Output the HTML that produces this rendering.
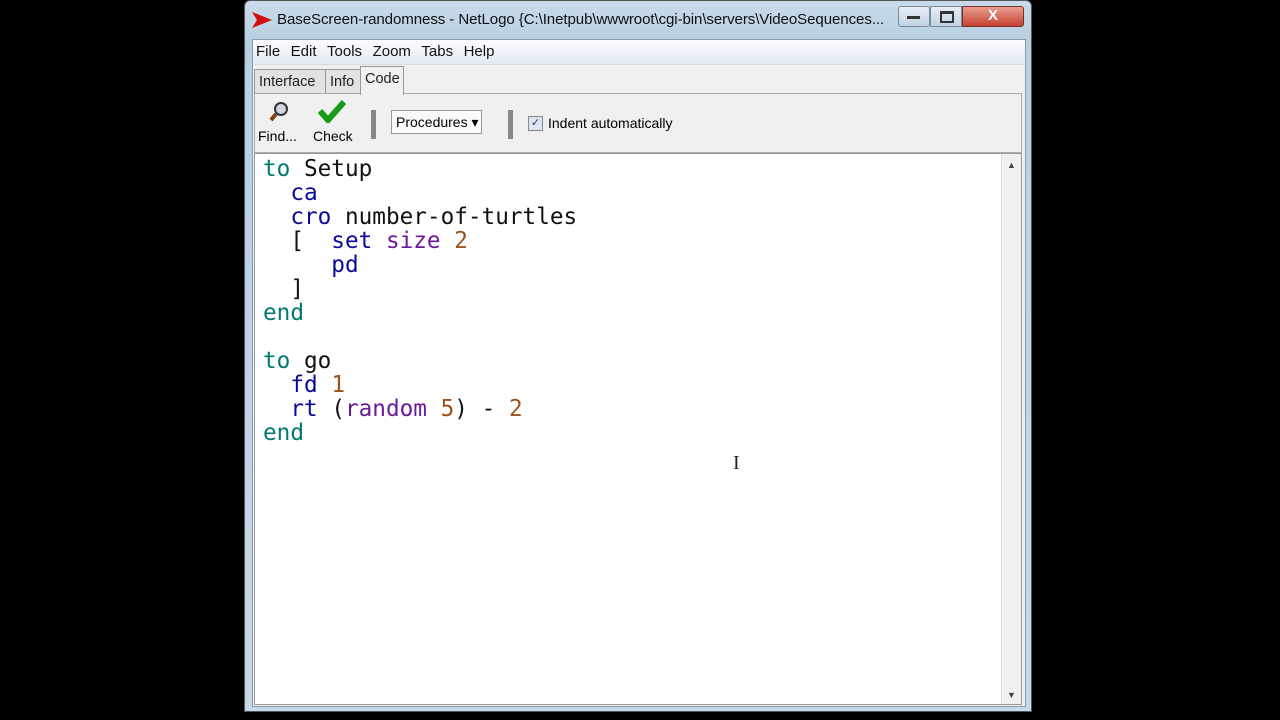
<!DOCTYPE html>
<html><head><style>
body{margin:0;width:1280px;height:720px;background:#000;position:relative;overflow:hidden;font-family:"Liberation Sans",sans-serif}
.win{position:absolute;left:244px;top:0;width:788px;height:712px;background:linear-gradient(#c9dbea,#b8cfe2 40px,#c5d9ea);border:1px solid #555;border-radius:6px 6px 0 0;box-sizing:border-box}
.title{position:absolute;left:32px;top:10px;font-size:15.1px;color:#111;white-space:nowrap;letter-spacing:-0.1px}
.client{position:absolute;left:7px;top:38px;width:772px;height:666px;background:#f0f0f0;border:1px solid #8a9aa8}
.menu{height:24px;background:linear-gradient(#fbfcfe,#e4ebf4);font-size:15px;color:#111;padding-left:3px;line-height:24px;border-bottom:1px solid #d4dbe4}
.menu span{margin-right:10.5px}
.tab{position:absolute;top:29px;height:24px;border:1px solid #999;border-bottom:none;background:#e2e2e2;font-size:14.5px;line-height:24px;padding:0 4px;color:#222}
.tool{position:absolute;left:1px;top:53px;width:766px;height:58px;border:1px solid #aaa;background:#f0f0f0}
.sep{position:absolute;top:16px;width:5px;height:29px;background:#888}
.code{position:absolute;left:1px;top:113px;width:766px;height:550px;background:#fff;border:1px solid #999}
.sb{position:absolute;right:0;top:0;width:19px;height:100%;background:#f0f0f0;border-left:1px solid #ddd}
pre{position:absolute;left:8px;top:3px;margin:0;font-family:"DejaVu Sans Mono","Liberation Mono",monospace;font-size:22.7px;line-height:24px;color:#111}
.k{color:#007a70}.c{color:#0a0a9a}.r{color:#6a1a9a}.n{color:#a0501a}
</style></head><body>
<div class="win">
<svg style="position:absolute;left:6px;top:10px" width="22" height="18"><path d="M1 1 L21 9 L1 17 L6 9Z" fill="#d01010"/></svg>
<div class="title">BaseScreen-randomness - NetLogo {C:\Inetpub\wwwroot\cgi-bin\servers\VideoSequences...</div>
<div style="position:absolute;left:653px;top:5px;width:30px;height:19px;border:1px solid #7a8a9a;border-radius:3px;background:linear-gradient(#e6eef6,#c2d2e2)"><div style="margin:9px 8px;height:3px;background:#333;width:13px"></div></div>
<div style="position:absolute;left:685px;top:5px;width:30px;height:19px;border:1px solid #7a8a9a;background:linear-gradient(#e6eef6,#c2d2e2)"><div style="margin:4px 9px;height:7px;width:10px;border:2px solid #333;border-top-width:3px"></div></div>
<div style="position:absolute;left:717px;top:5px;width:60px;height:19px;border:1px solid #7a3030;border-radius:0 3px 3px 0;background:linear-gradient(#e8a090,#c84030);color:#fff;font-weight:bold;text-align:center;font-size:15px;line-height:18px">X</div>
<div class="client">
<div class="menu"><span>File</span><span>Edit</span><span>Tools</span><span>Zoom</span><span>Tabs</span><span>Help</span></div>
<div class="tab" style="left:1px;width:64px">Interface</div>
<div class="tab" style="left:72px;width:27px">Info</div>
<div class="tab" style="left:107px;top:26px;height:28px;background:#f0f0f0;z-index:2;width:34px">Code</div>
<div class="tool">
<svg style="position:absolute;left:13px;top:7px" width="22" height="22"><circle cx="13" cy="8" r="6" fill="#cfd6de" stroke="#333" stroke-width="2"/><path d="M8 13 L3 19" stroke="#7a4010" stroke-width="4"/></svg>
<div style="position:absolute;left:3px;top:34px;font-size:14px">Find...</div>
<svg style="position:absolute;left:63px;top:5px" width="28" height="24"><path d="M2 12 L10 21 L26 3" stroke="#1a9a1a" stroke-width="6" fill="none"/></svg>
<div style="position:absolute;left:58px;top:34px;font-size:14px">Check</div>
<div class="sep" style="left:116px"></div>
<div style="position:absolute;left:136px;top:16px;width:91px;height:24px;border:1px solid #999;background:#fafafa;font-size:14px;line-height:23px;padding-left:4px;box-sizing:border-box">Procedures ▾</div>
<div class="sep" style="left:253px"></div>
<div style="position:absolute;left:273px;top:22px;width:13px;height:13px;border:1px solid #888;background:#dde6f0;font-size:11px;line-height:13px;text-align:center;color:#335">✓</div>
<div style="position:absolute;left:293px;top:21px;font-size:14px">Indent automatically</div>
</div>
<div class="code">
<pre><span class="k">to</span> Setup
  <span class="c">ca</span>
  <span class="c">cro</span> number-of-turtles
  [  <span class="c">set</span> <span class="r">size</span> <span class="n">2</span>
     <span class="c">pd</span>
  ]
<span class="k">end</span>

<span class="k">to</span> go
  <span class="c">fd</span> <span class="n">1</span>
  <span class="c">rt</span> (<span class="r">random</span> <span class="n">5</span>) - <span class="n">2</span>
<span class="k">end</span></pre>
<div class="sb"><div style="position:absolute;left:5px;top:6px;font-size:9px;color:#444">▲</div><div style="position:absolute;left:5px;bottom:4px;font-size:9px;color:#444">▼</div></div>
<div style="position:absolute;left:478px;top:298px;font-size:20px;color:#222;font-family:'Liberation Serif',serif">I</div>
</div>
</div>
</div>
</body></html>
